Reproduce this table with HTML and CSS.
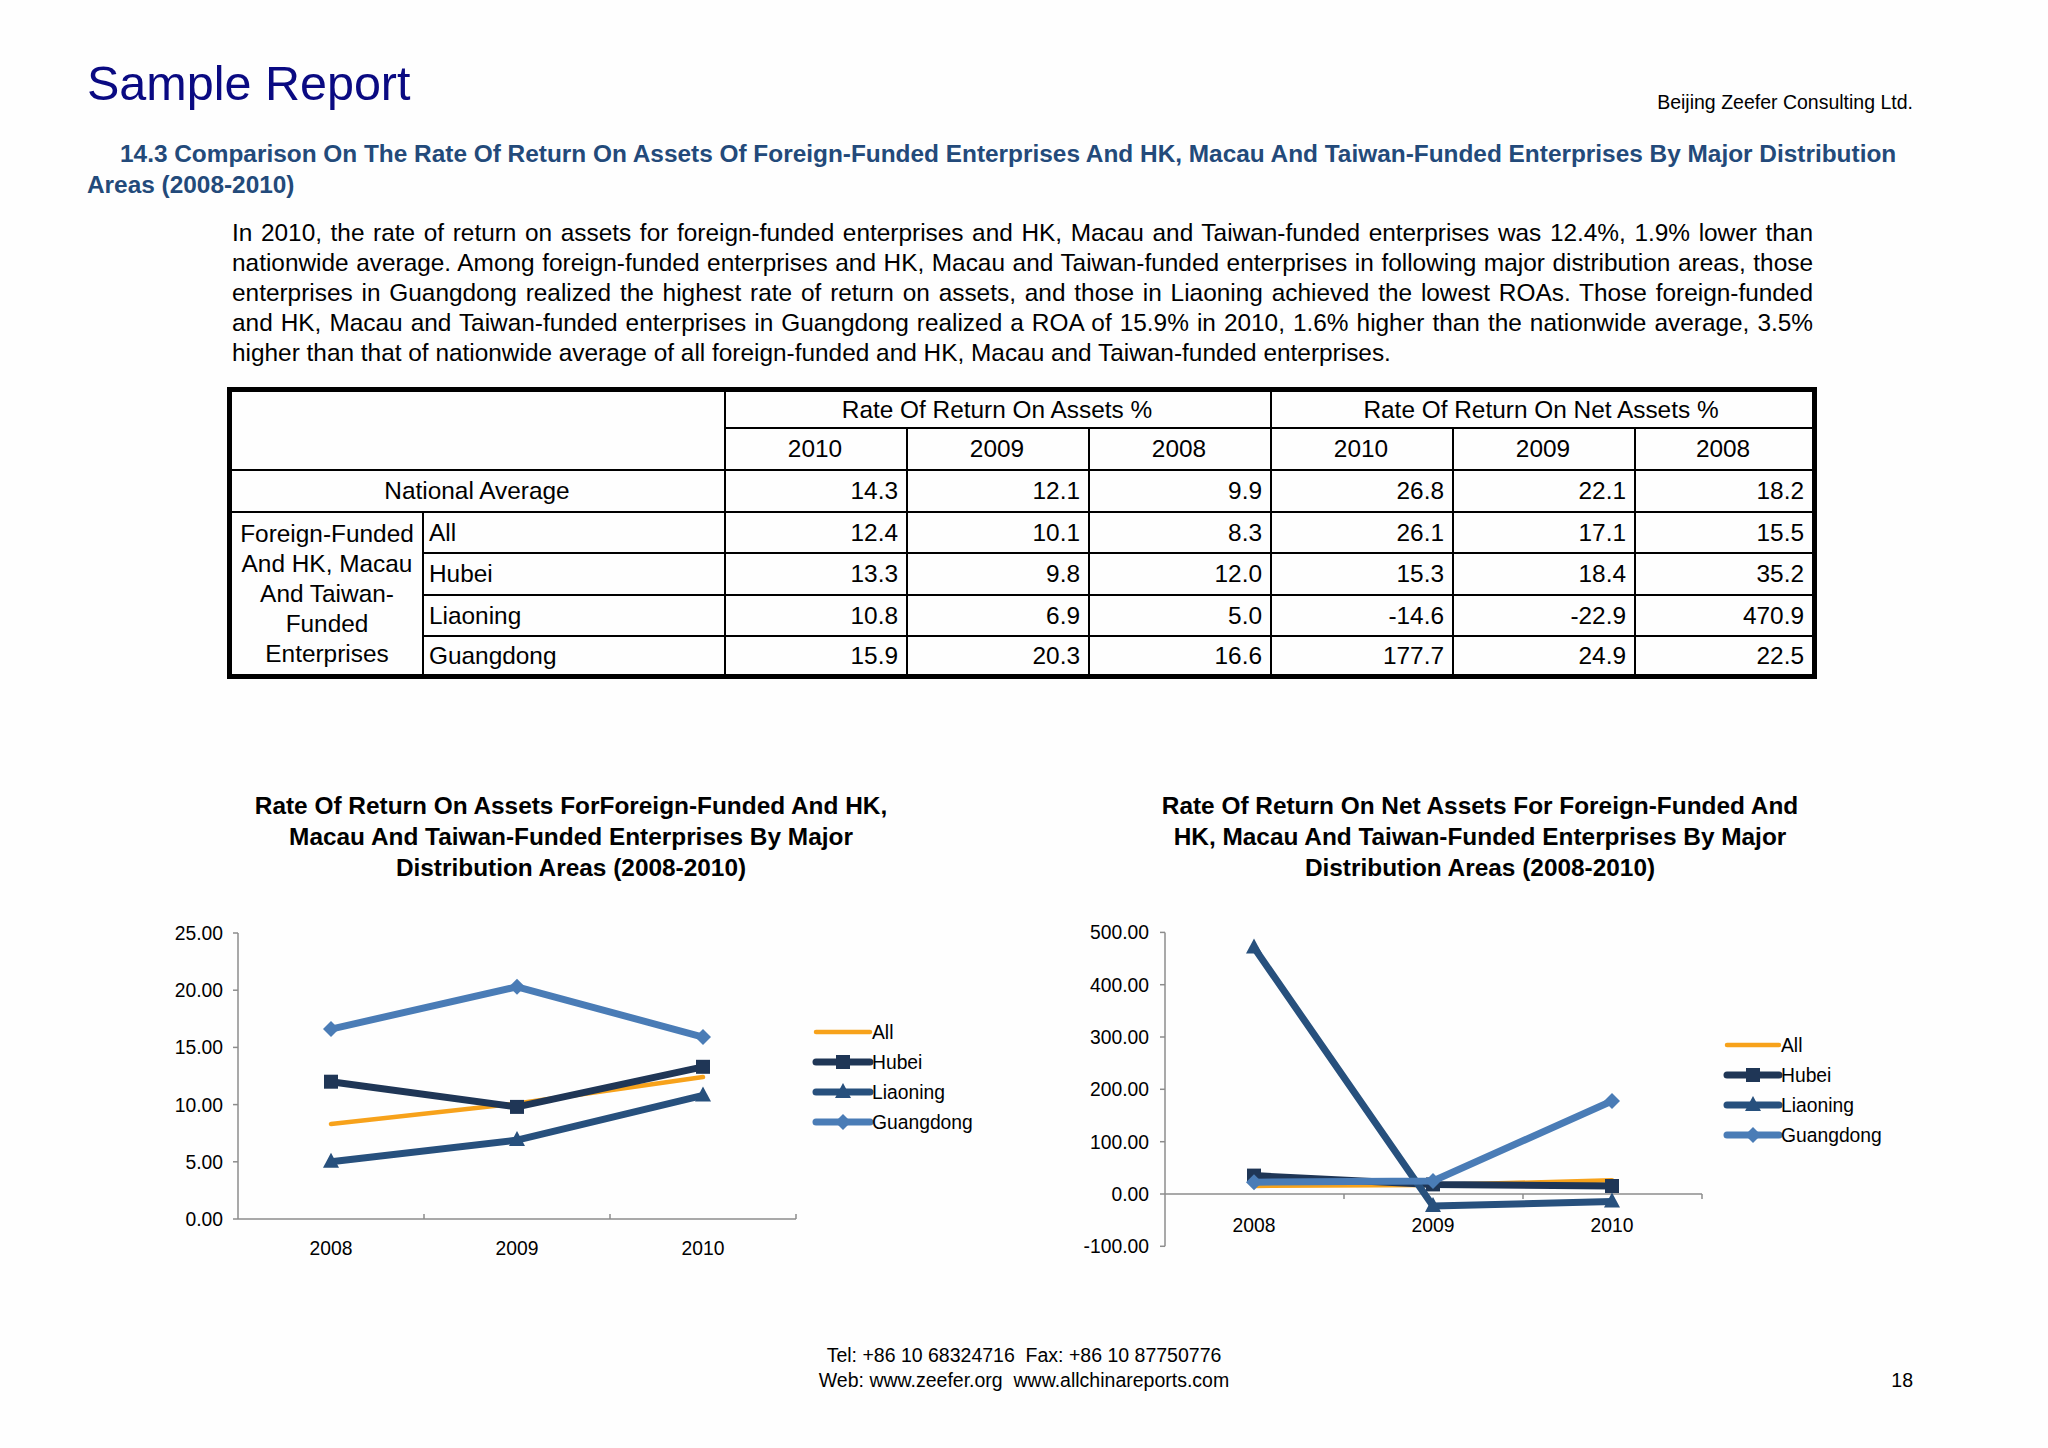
FILE: index.html
```html
<!DOCTYPE html>
<html lang="en">
<head>
<meta charset="utf-8">
<title>Sample Report</title>
<link rel="stylesheet" href="styles.css">
</head>
<body>
<div class="page">
  <header class="top">
    <h1 class="title">Sample Report</h1>
    <div class="company">Beijing Zeefer Consulting Ltd.</div>
  </header>

  <h2 class="section">14.3 Comparison On The Rate Of Return On Assets Of Foreign-Funded Enterprises And HK, Macau And Taiwan-Funded Enterprises By Major Distribution Areas (2008-2010)</h2>

  <p class="intro"><span class="ln">In 2010, the rate of return on assets for foreign-funded enterprises and HK, Macau and Taiwan-funded enterprises was 12.4%, 1.9% lower than</span> <span class="ln">nationwide average. Among foreign-funded enterprises and HK, Macau and Taiwan-funded enterprises in following major distribution areas, those</span> <span class="ln">enterprises in Guangdong realized the highest rate of return on assets, and those in Liaoning achieved the lowest ROAs. Those foreign-funded</span> <span class="ln">and HK, Macau and Taiwan-funded enterprises in Guangdong realized a ROA of 15.9% in 2010, 1.6% higher than the nationwide average, 3.5%</span> <span class="ln ln-end">higher than that of nationwide average of all foreign-funded and HK, Macau and Taiwan-funded enterprises.</span></p>

  <table class="data">
    <colgroup>
      <col class="c-group">
      <col class="c-sub">
      <col class="c-num"><col class="c-num"><col class="c-num">
      <col class="c-num"><col class="c-num"><col class="c-last">
    </colgroup>
    <tr class="r-h1">
      <th colspan="2" rowspan="2"></th>
      <th colspan="3">Rate Of Return On Assets %</th>
      <th colspan="3" class="end">Rate Of Return On Net Assets %</th>
    </tr>
    <tr class="r-h2">
      <th>2010</th><th>2009</th><th>2008</th><th>2010</th><th>2009</th><th class="end">2008</th>
    </tr>
    <tr class="r-a">
      <th colspan="2">National Average</th>
      <td>14.3</td><td>12.1</td><td>9.9</td><td>26.8</td><td>22.1</td><td class="end">18.2</td>
    </tr>
    <tr class="r-b">
      <th rowspan="4" class="group">Foreign-Funded<br>And HK, Macau<br>And Taiwan-<br>Funded<br>Enterprises</th>
      <th class="sub">All</th>
      <td>12.4</td><td>10.1</td><td>8.3</td><td>26.1</td><td>17.1</td><td class="end">15.5</td>
    </tr>
    <tr class="r-c">
      <th class="sub">Hubei</th>
      <td>13.3</td><td>9.8</td><td>12.0</td><td>15.3</td><td>18.4</td><td class="end">35.2</td>
    </tr>
    <tr class="r-d">
      <th class="sub">Liaoning</th>
      <td>10.8</td><td>6.9</td><td>5.0</td><td>-14.6</td><td>-22.9</td><td class="end">470.9</td>
    </tr>
    <tr class="r-e last">
      <th class="sub">Guangdong</th>
      <td>15.9</td><td>20.3</td><td>16.6</td><td>177.7</td><td>24.9</td><td class="end">22.5</td>
    </tr>
  </table>

  <div class="charts">
    <figure class="chart">
      <figcaption class="chart-title">Rate Of Return On Assets ForForeign-Funded And HK,<br>Macau And Taiwan-Funded Enterprises By Major<br>Distribution Areas (2008-2010)</figcaption>
      <svg class="plot" width="840" height="380" viewBox="0 0 840 380">
        <g class="axis">
          <line x1="87" y1="50" x2="87" y2="336"/>
          <line x1="87" y1="336" x2="645" y2="336"/>
          <line x1="82" y1="50" x2="87" y2="50"/>
          <line x1="82" y1="107.2" x2="87" y2="107.2"/>
          <line x1="82" y1="164.4" x2="87" y2="164.4"/>
          <line x1="82" y1="221.6" x2="87" y2="221.6"/>
          <line x1="82" y1="278.8" x2="87" y2="278.8"/>
          <line x1="82" y1="336" x2="87" y2="336"/>
          <line x1="273" y1="331" x2="273" y2="336"/>
          <line x1="459" y1="331" x2="459" y2="336"/>
          <line x1="645" y1="331" x2="645" y2="336"/>
        </g>
        <g class="ylab">
          <text x="72" y="57">25.00</text>
          <text x="72" y="114.2">20.00</text>
          <text x="72" y="171.4">15.00</text>
          <text x="72" y="228.6">10.00</text>
          <text x="72" y="285.8">5.00</text>
          <text x="72" y="343">0.00</text>
        </g>
        <g class="xlab">
          <text x="180" y="372">2008</text>
          <text x="366" y="372">2009</text>
          <text x="552" y="372">2010</text>
        </g>
        <polyline class="s-all" points="180,241 366,220.5 552,194.1"/>
        <polyline class="s-hubei" points="180,198.7 366,223.9 552,183.8"/>
        <g class="m-hubei">
          <rect x="173" y="191.7" width="14" height="14"/>
          <rect x="359" y="216.9" width="14" height="14"/>
          <rect x="545" y="176.8" width="14" height="14"/>
        </g>
        <polyline class="s-liaoning" points="180,278.8 366,257.1 552,212.4"/>
        <g class="m-liaoning">
          <polygon points="180,269.8 188,284.8 172,284.8"/>
          <polygon points="366,248.1 374,263.1 358,263.1"/>
          <polygon points="552,203.4 560,218.4 544,218.4"/>
        </g>
        <polyline class="s-guangdong" points="180,146.1 366,103.8 552,154.1"/>
        <g class="m-guangdong">
          <polygon points="180,138.1 188,146.1 180,154.1 172,146.1"/>
          <polygon points="366,95.8 374,103.8 366,111.8 358,103.8"/>
          <polygon points="552,146.1 560,154.1 552,162.1 544,154.1"/>
        </g>
        <g class="legend">
          <line class="s-all" x1="665" y1="149" x2="719" y2="149"/>
          <text x="721" y="156">All</text>
          <line class="s-hubei" x1="665" y1="179" x2="719" y2="179"/>
          <rect class="m-hubei" x="685" y="172" width="14" height="14"/>
          <text x="721" y="186">Hubei</text>
          <line class="s-liaoning" x1="665" y1="209" x2="719" y2="209"/>
          <polygon class="m-liaoning" points="692,200 700,215 684,215"/>
          <text x="721" y="216">Liaoning</text>
          <line class="s-guangdong" x1="665" y1="239" x2="719" y2="239"/>
          <polygon class="m-guangdong" points="692,231 700,239 692,247 684,239"/>
          <text x="721" y="246">Guangdong</text>
        </g>
      </svg>
    </figure>

    <figure class="chart">
      <figcaption class="chart-title">Rate Of Return On Net Assets For Foreign-Funded And<br>HK, Macau And Taiwan-Funded Enterprises By Major<br>Distribution Areas (2008-2010)</figcaption>
      <svg class="plot" width="840" height="380" viewBox="0 0 840 380">
        <g class="axis">
          <line x1="105" y1="49.4" x2="105" y2="363.3"/>
          <line x1="105" y1="311" x2="642" y2="311"/>
          <line x1="100" y1="49.4" x2="105" y2="49.4"/>
          <line x1="100" y1="101.7" x2="105" y2="101.7"/>
          <line x1="100" y1="154" x2="105" y2="154"/>
          <line x1="100" y1="206.3" x2="105" y2="206.3"/>
          <line x1="100" y1="258.7" x2="105" y2="258.7"/>
          <line x1="100" y1="311" x2="105" y2="311"/>
          <line x1="100" y1="363.3" x2="105" y2="363.3"/>
          <line x1="284" y1="311" x2="284" y2="316"/>
          <line x1="463" y1="311" x2="463" y2="316"/>
          <line x1="642" y1="311" x2="642" y2="316"/>
        </g>
        <g class="ylab">
          <text x="89" y="56.4">500.00</text>
          <text x="89" y="108.7">400.00</text>
          <text x="89" y="161">300.00</text>
          <text x="89" y="213.3">200.00</text>
          <text x="89" y="265.7">100.00</text>
          <text x="89" y="318">0.00</text>
          <text x="89" y="370.3">-100.00</text>
        </g>
        <g class="xlab">
          <text x="194" y="349">2008</text>
          <text x="373" y="349">2009</text>
          <text x="552" y="349">2010</text>
        </g>
        <polyline class="s-all" points="194,302.9 373,302.1 552,297.3"/>
        <polyline class="s-hubei" points="194,292.6 373,301.4 552,303"/>
        <g class="m-hubei">
          <rect x="187" y="285.6" width="14" height="14"/>
          <rect x="366" y="294.4" width="14" height="14"/>
          <rect x="545" y="296" width="14" height="14"/>
        </g>
        <polyline class="s-liaoning" points="194,64.6 373,323 552,318.6"/>
        <g class="m-liaoning">
          <polygon points="194,55.6 202,70.6 186,70.6"/>
          <polygon points="373,314 381,329 365,329"/>
          <polygon points="552,309.6 560,324.6 544,324.6"/>
        </g>
        <polyline class="s-guangdong" points="194,299.2 373,298 552,218"/>
        <g class="m-guangdong">
          <polygon points="194,291.2 202,299.2 194,307.2 186,299.2"/>
          <polygon points="373,290 381,298 373,306 365,298"/>
          <polygon points="552,210 560,218 552,226 544,218"/>
        </g>
        <g class="legend">
          <line class="s-all" x1="667" y1="162" x2="719" y2="162"/>
          <text x="721" y="169">All</text>
          <line class="s-hubei" x1="667" y1="192" x2="719" y2="192"/>
          <rect class="m-hubei" x="686" y="185" width="14" height="14"/>
          <text x="721" y="199">Hubei</text>
          <line class="s-liaoning" x1="667" y1="222" x2="719" y2="222"/>
          <polygon class="m-liaoning" points="693,213 701,228 685,228"/>
          <text x="721" y="229">Liaoning</text>
          <line class="s-guangdong" x1="667" y1="252" x2="719" y2="252"/>
          <polygon class="m-guangdong" points="693,244 701,252 693,260 685,252"/>
          <text x="721" y="259">Guangdong</text>
        </g>
      </svg>
    </figure>
  </div>

  <footer class="foot">
    <div></div>
    <div class="contact">Tel: +86 10 68324716&nbsp; Fax: +86 10 87750776<br>Web: www.zeefer.org&nbsp; www.allchinareports.com</div>
    <div class="pnum">18</div>
  </footer>
</div>
</body>
</html>
```

FILE: styles.css
```css
* { box-sizing: border-box; }

body {
  margin: 0;
  background: #ffffff;
  font-family: "Liberation Sans", Arial, sans-serif;
  color: #000;
}

.page {
  width: 2048px;
  height: 1448px;
  padding: 55px 135px 0 87px;
  overflow: hidden;
  background: #fefefe;
}

/* header */
.top {
  display: flex;
  justify-content: space-between;
  align-items: flex-end;
}
.title {
  margin: 0;
  font-weight: normal;
  font-size: 48.5px;
  line-height: 56px;
  color: #0a0a82;
}
.company {
  font-size: 19.5px;
  line-height: 22px;
  margin-bottom: -2px;
}

.section {
  margin: 27px 0 0;
  font-size: 24.4px;
  line-height: 31px;
  font-weight: bold;
  color: #234a7a;
  text-indent: 33px;
}

.intro {
  margin: 18px 100px 0 145px;
  font-size: 24.4px;
  line-height: 30px;
}
.intro .ln {
  display: block;
  text-align: justify;
  text-align-last: justify;
  white-space: nowrap;
}
.intro .ln-end {
  text-align-last: left;
}

/* table */
.data {
  margin: 19px 0 0 140px;
  width: 1590px;
  border-collapse: separate;
  border-spacing: 0;
  table-layout: fixed;
  border: 5px solid #000;
  font-size: 24.4px;
}
.c-group { width: 192px; }
.c-sub { width: 302px; }
.c-num { width: 182px; }
.c-last { width: 176px; }

.data th,
.data td {
  border-right: 2px solid #000;
  border-bottom: 2px solid #000;
  padding: 0 8px 0 6px;
  font-weight: normal;
  text-align: center;
  vertical-align: middle;
  line-height: 28px;
  white-space: nowrap;
}
.data td { text-align: right; }
.data .end { border-right: none; }
.data .last th,
.data .last td,
.data .group { border-bottom: none; }
.data .sub { text-align: left; padding-left: 5px; }
.data .group { line-height: 30px; padding: 0 4px; }

.r-h1 { height: 37px; }
.r-h2 { height: 42px; }
.r-a { height: 42px; }
.r-b { height: 41px; }
.r-c { height: 42px; }
.r-d { height: 41px; }
.r-e { height: 37px; }

/* charts */
.charts {
  display: flex;
  gap: 69px;
  margin: 111px 0 0 64px;
}
.chart {
  margin: 0;
  width: 840px;
}
.chart-title {
  font-size: 24.4px;
  line-height: 31px;
  font-weight: bold;
  text-align: center;
}
.plot {
  display: block;
  font-family: "Liberation Sans", Arial, sans-serif;
  font-size: 19.3px;
}
.axis line { stroke: #8c8c8c; stroke-width: 1.5; }
.ylab text { text-anchor: end; fill: #000; }
.xlab text { text-anchor: middle; fill: #000; }
.legend text { fill: #000; }

.s-all, .s-hubei, .s-liaoning, .s-guangdong {
  fill: none;
  stroke-linejoin: round;
  stroke-linecap: round;
}
.s-all { stroke: #f7a21b; stroke-width: 4.5; }
.s-hubei { stroke: #1f3656; stroke-width: 7; }
.s-liaoning { stroke: #27507d; stroke-width: 7; }
.s-guangdong { stroke: #4a7cb6; stroke-width: 7; }
.m-hubei { fill: #1f3656; }
.m-liaoning { fill: #27507d; }
.m-guangdong { fill: #4a7cb6; }

/* footer */
.foot {
  display: grid;
  grid-template-columns: 1fr auto 1fr;
  margin: 80px 0 0 48px;
  font-size: 19.5px;
  line-height: 25px;
}
.contact { text-align: center; }
.pnum { justify-self: end; align-self: end; }
```
